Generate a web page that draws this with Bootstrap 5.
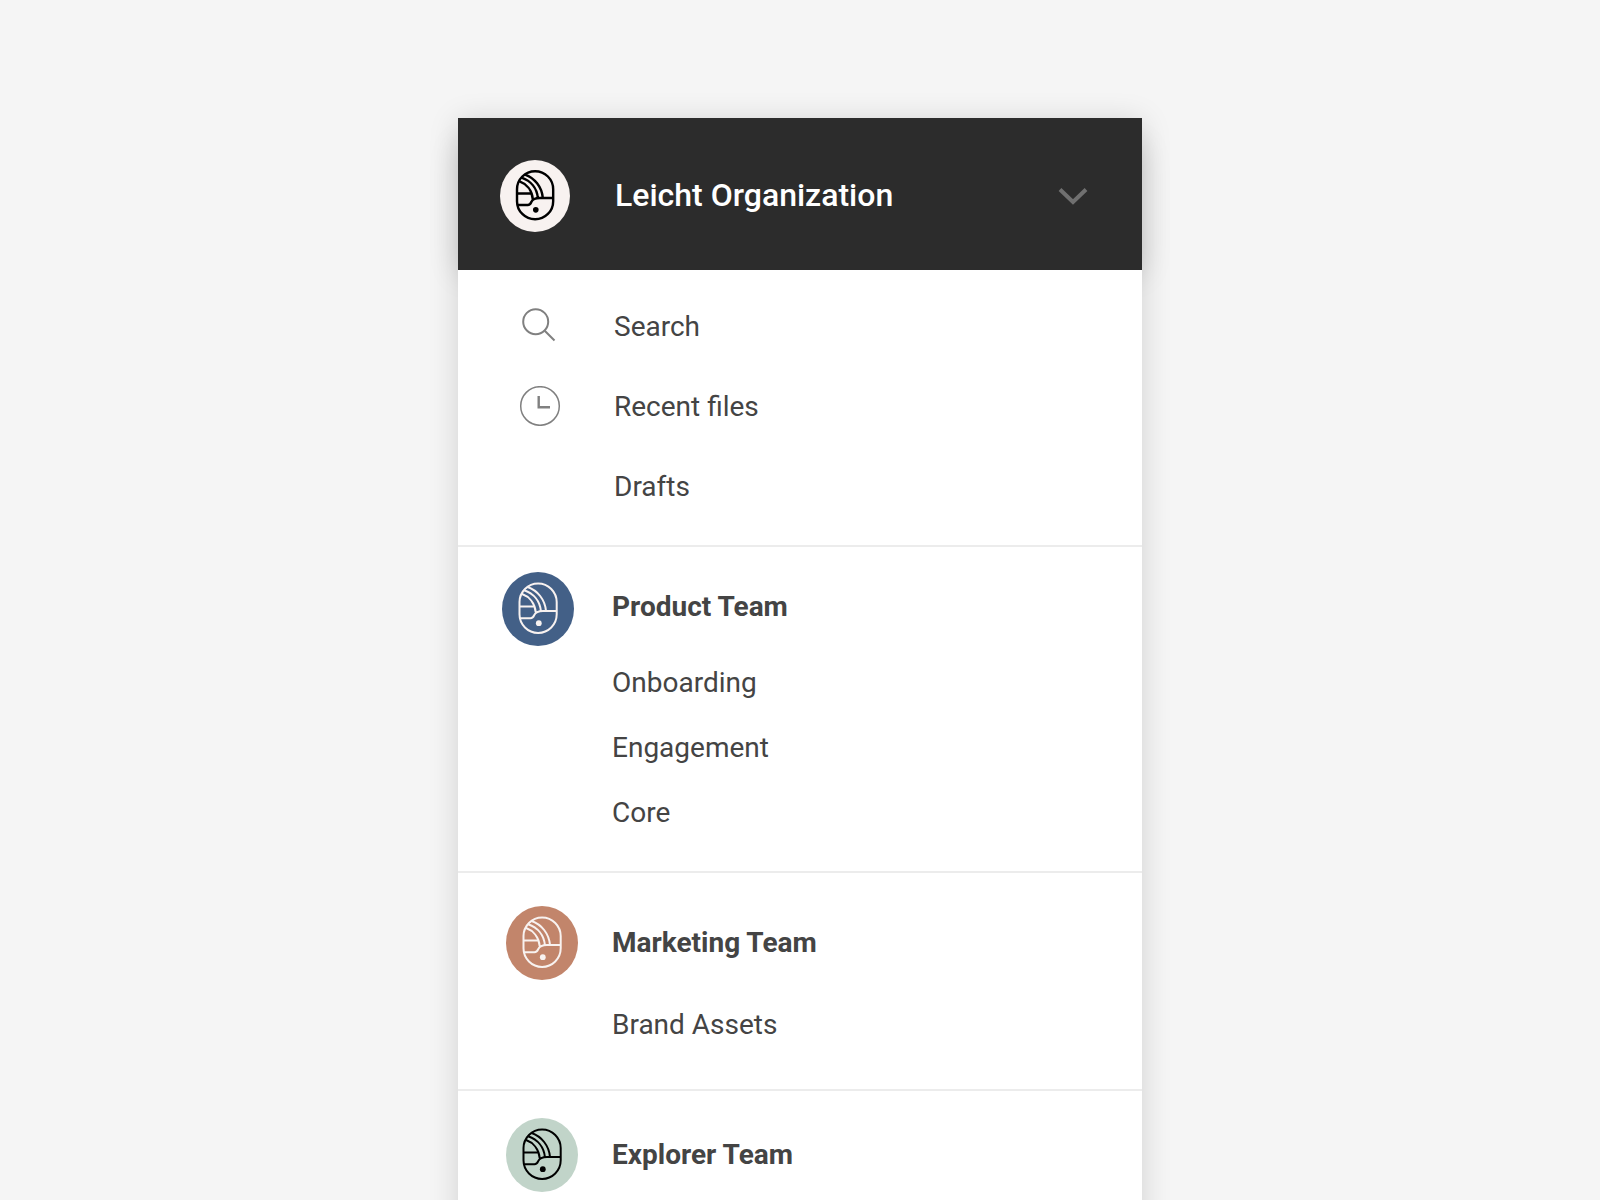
<!DOCTYPE html>
<html lang="en">
<head>
<meta charset="utf-8">
<meta name="viewport" content="width=device-width, initial-scale=1">
<title>Leicht Organization</title>
<link href="https://cdn.jsdelivr.net/npm/bootstrap@5.3.0/dist/css/bootstrap.min.css" rel="stylesheet">
<style>
  body { background: #f5f5f5; color: #444; font-family: Roboto, "Liberation Sans", sans-serif; font-size: 28px; line-height: 40px; padding-top: 118px; }
  .side-panel { max-width: 684px; box-shadow: 0 28px 28px rgba(0, 0, 0, .15); }
  .org-bar, .org-bar:hover { background: #2c2c2c; }
  .org-bar { height: 152px; padding: 4px 53px 0 0; box-shadow: 0 3px 28px rgba(0, 0, 0, .15); }
  .org-name { font-size: 32px; font-weight: 500; padding-bottom: 2px; }
  .lead-col { flex: 0 0 154px; }
  .org-bar .lead-col { padding-left: 42px; flex-basis: 157px; }
  .quick-links { padding: 17px 0 18px; }
  .quick-links a { height: 80px; }
  .quick-links .lead-col { flex-basis: 156px; padding: 0 0 2px 60px; }
  .team { border-top: 2px solid #ececec; }
  .team .lead-col { padding-left: 48px; }
  .team-product { padding: 25px 0 26px; }
  .team-product .lead-col { padding-left: 44px; }
  .team-product .team-title { line-height: 70px; }
  .team-product ul { padding-top: 4px; }
  .team-marketing { padding: 33px 0 32px; }
  .team-marketing ul { padding-top: 12px; }
  .team-explorer { padding: 27px 0 8px; }
  .team-title { font-size: 28px; font-weight: 700; line-height: 74px; }
  .team ul { padding-left: 154px; }
  .team li a { line-height: 65px; }
  a, a:hover { color: inherit; text-decoration: none; }
  svg { display: block; fill: none; }
  .mark-logo { color: #f8f2f0; stroke: currentColor; stroke-width: 2; }
  .mark-logo.ink { color: #000; }
  .mark-logo.bold-ink { stroke-width: 2.5; }
</style>
<script src="https://cdn.jsdelivr.net/npm/bootstrap@5.3.0/dist/js/bootstrap.bundle.min.js" defer></script>
</head>
<body class="d-flex flex-column min-vh-100">
<svg width="0" height="0" class="position-absolute" aria-hidden="true">
  <symbol id="face" viewBox="0 0 72 74">
    <rect x="17.5" y="11.5" width="37.2" height="49.4" rx="18.6"/>
    <path d="M54.7 39H41C35.5 39 33.3 40.5 32.2 43.2Q31 46.3 28.5 46.3H17.6M17.5 34.4H32.6M19.6 21.8C27 24.5 33 31 33.7 40.2M22.2 18.2C31.5 21.5 38 29 38.9 39M25.7 15C35.5 18.5 43 27.5 44 39"/>
    <circle cx="36.8" cy="51.2" r="2.9" fill="currentColor" stroke="none"/>
  </symbol>
</svg>

<aside class="side-panel w-100 mx-auto flex-grow-1 d-flex flex-column">
  <header>
    <button type="button" class="org-bar btn border-0 rounded-0 w-100 d-flex align-items-center text-start text-white">
      <span class="lead-col"><svg class="mark-logo ink bold-ink" width="70" height="72" viewBox="0 0 72 74" preserveAspectRatio="none" aria-hidden="true"><ellipse cx="36" cy="37" rx="36" ry="37" fill="#f8f2f0" stroke="none"/><use href="#face" width="72" height="74"/></svg></span>
      <span class="org-name flex-grow-1">Leicht Organization</span>
      <svg width="32" height="20" viewBox="0 0 32 20" stroke="#707070" stroke-width="4" aria-hidden="true"><path d="M3 3.5 16 16 29 3.5"/></svg>
    </button>
  </header>

  <div class="bg-white position-relative flex-grow-1">
    <nav class="quick-links" aria-label="Files">
      <a href="#search" class="d-flex align-items-center">
        <span class="lead-col"><svg width="40" height="40" viewBox="0 0 40 40" stroke="#808080" stroke-width="2" aria-hidden="true"><circle cx="17.7" cy="15.7" r="12.5"/><path d="M26.7 24.7 36.5 34.5"/></svg></span>
        Search
      </a>
      <a href="#recent" class="d-flex align-items-center">
        <span class="lead-col"><svg width="44" height="40" viewBox="0 0 44 40" stroke="#808080" aria-hidden="true"><circle cx="22" cy="20" r="19.3" stroke-width="1.5"/><path d="M20.7 10V21.3H32" stroke-width="2.4"/></svg></span>
        Recent files
      </a>
      <a href="#drafts" class="d-flex align-items-center"><span class="lead-col"></span>Drafts</a>
    </nav>

    <section class="team team-product">
      <div class="d-flex align-items-start">
        <span class="lead-col"><svg class="mark-logo" width="72" height="74" viewBox="0 0 72 74" aria-hidden="true"><ellipse cx="36" cy="37" rx="36" ry="37" fill="#436087" stroke="none"/><use href="#face" width="72" height="74"/></svg></span>
        <h2 class="team-title m-0">Product Team</h2>
      </div>
      <ul class="list-unstyled m-0">
        <li><a class="d-block" href="#onboarding">Onboarding</a></li>
        <li><a class="d-block" href="#engagement">Engagement</a></li>
        <li><a class="d-block" href="#core">Core</a></li>
      </ul>
    </section>

    <section class="team team-marketing">
      <div class="d-flex align-items-start">
        <span class="lead-col"><svg class="mark-logo" width="72" height="74" viewBox="0 0 72 74" aria-hidden="true"><ellipse cx="36" cy="37" rx="36" ry="37" fill="#c2856b" stroke="none"/><use href="#face" width="72" height="74"/></svg></span>
        <h2 class="team-title m-0">Marketing Team</h2>
      </div>
      <ul class="list-unstyled m-0">
        <li><a class="d-block" href="#brand">Brand Assets</a></li>
      </ul>
    </section>

    <section class="team team-explorer">
      <div class="d-flex align-items-start">
        <span class="lead-col"><svg class="mark-logo ink" width="72" height="74" viewBox="0 0 72 74" aria-hidden="true"><ellipse cx="36" cy="37" rx="36" ry="37" fill="#c1d4c9" stroke="none"/><use href="#face" width="72" height="74"/></svg></span>
        <h2 class="team-title m-0">Explorer Team</h2>
      </div>
    </section>
  </div>
</aside>
</body>
</html>
